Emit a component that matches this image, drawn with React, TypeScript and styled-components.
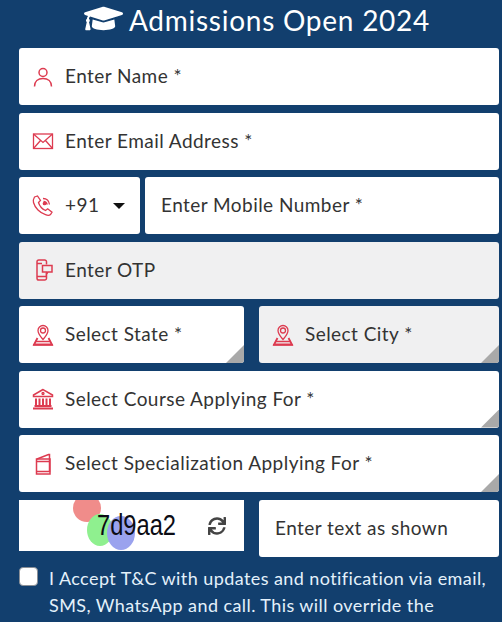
import React from "react";
import styled, { createGlobalStyle } from "styled-components";
import { FaGraduationCap, FaSync } from "react-icons/fa";

const GlobalStyle = createGlobalStyle`
  html, body {
    margin: 0;
    height: 622px;
    overflow: hidden;
    background: #123f6e;
  }
  * {
    box-sizing: border-box;
  }
`;

const Page = styled.div`
  width: 502px;
  height: 622px;
  overflow: hidden;
  padding: 0 3px 0 19px;
  background: #123f6e;
  font-family: Lato, "Open Sans", sans-serif;
`;

const Heading = styled.h1`
  height: 48px;
  margin: 0;
  display: flex;
  align-items: center;
  justify-content: center;
  gap: 6px;
  padding: 0 4px 9px 0;
  color: #fff;
  font-size: 28px;
  font-weight: 400;
  letter-spacing: 0.75px;
  svg {
    font-size: 39px;
    margin-top: -2px;
  }
`;

const Form = styled.div`
  display: flex;
  flex-direction: column;
  gap: 7.5px;
`;

const Row = styled.div<{ $gap: number }>`
  display: flex;
  gap: ${(p) => p.$gap}px;
`;

const Field = styled.div<{ $width?: number; $grey?: boolean; $pad?: number; $arrow?: boolean }>`
  position: relative;
  flex: ${(p) => (p.$width ? `0 0 ${p.$width}px` : "1 1 auto")};
  height: 57px;
  display: flex;
  align-items: center;
  padding-left: ${(p) => p.$pad ?? 13}px;
  padding-bottom: 2px;
  border-radius: 3px;
  overflow: hidden;
  background: ${(p) => (p.$grey ? "#f0f0f1" : "#fff")};
  color: #333;
  font-size: 19px;
  letter-spacing: 0.45px;
  &::after {
    content: "";
    display: ${(p) => (p.$arrow ? "block" : "none")};
    position: absolute;
    right: 0;
    bottom: 0;
    width: 18px;
    height: 18px;
    background: #a9a9a9;
    clip-path: polygon(100% 0, 100% 100%, 0 100%);
  }
`;

const IconSlot = styled.span`
  flex: 0 0 33px;
  display: flex;
  align-items: center;
  margin-top: 2px;
  svg {
    width: 22px;
    height: 22px;
    fill: none;
    stroke: #dd3b50;
    stroke-width: 1.3;
  }
`;

const Caret = styled.span`
  width: 0;
  height: 0;
  margin-left: 14px;
  margin-top: 2px;
  border-left: 6px solid transparent;
  border-right: 6px solid transparent;
  border-top: 6px solid #111;
`;

const CaptchaRow = styled.div`
  display: flex;
  gap: 15px;
`;

const CaptchaBox = styled.div`
  position: relative;
  flex: 0 0 225px;
  height: 51px;
  background: #fff;
  svg.captcha {
    display: block;
  }
`;

const Refresh = styled.span`
  position: absolute;
  left: 189px;
  top: 17px;
  display: flex;
  color: #444;
  font-size: 18px;
`;

const Accept = styled.div`
  display: flex;
  gap: 11px;
  padding-top: 8px;
`;

const Tick = styled.span`
  flex: 0 0 19px;
  height: 19px;
  margin-top: 2px;
  background: #fff;
  border: 1px solid #8a8f96;
  border-radius: 4px;
`;

const AcceptText = styled.p`
  margin: 0;
  width: 445px;
  color: #e4f1fb;
  font-size: 18px;
  letter-spacing: 0.42px;
  line-height: 27px;
`;

const User = () => (
  <svg viewBox="0 0 22 22">
    <circle cx="11" cy="6.500" r="4" strokeWidth="1.500" />
    <path d="M2.500 20.500c0-5 3.500-8 8.500-8s8.500 3 8.500 8" strokeWidth="1.500" />
  </svg>
);

const Mail = () => (
  <svg viewBox="0 0 22 22">
    <rect x="1.500" y="4" width="19" height="14.500" />
    <path d="M1.500 4 11 12.500 20.500 4M1.500 18.500 8.500 10.500M20.500 18.500 13.500 10.500" />
  </svg>
);

const Phone = () => (
  <svg viewBox="0 0 22 22">
    <path d="M2.500 2 5.500 1l3 4.500-2 2c.8 2.800 3.800 6.500 7 8l2.200-1.700 4.300 3.400-1.500 2.300c-1 1-3 1-5 .2C8 18 3 13 1.500 7.500c-.5-2 0-3.800 1-5.500z" />
    <path d="M11 3.500c3.500 0 6 2.500 6.500 6M11.500 6.500c2 0 3.300 1.300 3.700 3.200" />
    <circle cx="12.500" cy="8.500" r="1.200" fill="#dd3b50" />
  </svg>
);

const Otp = () => (
  <svg viewBox="0 0 22 22">
    <path d="M14.500 5.500V2.800A1.800 1.800 0 0 0 12.700 1H6.800A1.800 1.800 0 0 0 5 2.800v16.400A1.800 1.800 0 0 0 6.800 21h5.900a1.800 1.800 0 0 0 1.800-1.800V14" strokeWidth="1.500" />
    <path d="M5 4.500h5M5 17.500h9.500" />
    <path d="M10.500 6.500h9.500v6.500h-4l-1.500 2v-2h-4z" strokeWidth="1.500" />
  </svg>
);

const Pin = () => (
  <svg viewBox="0 0 22 22">
    <path d="M11 15.500c-2.500-3-5-5.500-5-9a5 5 0 0 1 10 0c0 3.500-2.500 6-5 9z" />
    <circle cx="11" cy="6.500" r="2.500" />
    <path d="M5.500 14 2 20.500h18l-3.500-6.500" strokeWidth="1.800" />
    <path d="M3.500 17.500h15M1 21h20" strokeWidth="1.600" />
  </svg>
);

const Bank = () => (
  <svg viewBox="0 0 22 22">
    <path d="M11 1.500 1.500 7v1.500h19V7z" strokeWidth="1.500" />
    <path d="M4 10.500v6.500M7.500 10.500v6.500M11 10.500v6.500M14.500 10.500v6.500M18 10.500v6.500" strokeWidth="2" />
    <path d="M2.500 18h17M1 20.500h20" strokeWidth="1.800" />
    <circle cx="11" cy="5.500" r="1" />
  </svg>
);

const Book = () => (
  <svg viewBox="0 0 22 22">
    <path d="M5 6 16.500 1.500h1V19" strokeWidth="1.500" />
    <rect x="4.500" y="6" width="13.500" height="15" strokeWidth="1.500" />
    <path d="M4.500 18.500h13.500M4.500 8.500h13.500" />
  </svg>
);

const Captcha = () => (
  <svg className="captcha" width="225" height="51" viewBox="0 0 225 51">
    <ellipse cx="68" cy="8" rx="14" ry="14" fill="#f08c8a" />
    <ellipse cx="81" cy="30" rx="13" ry="16" fill="#8ff08f" />
    <ellipse cx="102" cy="33" rx="14" ry="17" fill="#9aa2ee" />
    <text x="78" y="35" fontFamily="Liberation Sans" fontSize="30" textLength="79" lengthAdjust="spacingAndGlyphs" fill="#0c0c14">
      7d9aa2
    </text>
  </svg>
);

export default function App() {
  return (
    <Page>
      <GlobalStyle />
      <Heading>
        <FaGraduationCap />
        Admissions Open 2024
      </Heading>
      <Form>
        <Field>
          <IconSlot><User /></IconSlot>
          Enter Name *
        </Field>
        <Field>
          <IconSlot><Mail /></IconSlot>
          Enter Email Address *
        </Field>
        <Row $gap={5}>
          <Field $width={121}>
            <IconSlot><Phone /></IconSlot>
            +91
            <Caret />
          </Field>
          <Field $pad={16}>Enter Mobile Number *</Field>
        </Row>
        <Field $grey>
          <IconSlot><Otp /></IconSlot>
          Enter OTP
        </Field>
        <Row $gap={15}>
          <Field $width={225} $arrow>
            <IconSlot><Pin /></IconSlot>
            Select State *
          </Field>
          <Field $grey $arrow>
            <IconSlot><Pin /></IconSlot>
            Select City *
          </Field>
        </Row>
        <Field $arrow>
          <IconSlot><Bank /></IconSlot>
          Select Course Applying For *
        </Field>
        <Field $arrow>
          <IconSlot><Book /></IconSlot>
          Select Specialization Applying For *
        </Field>
        <CaptchaRow>
          <CaptchaBox>
            <Captcha />
            <Refresh><FaSync /></Refresh>
          </CaptchaBox>
          <Field $pad={16}>Enter text as shown</Field>
        </CaptchaRow>
      </Form>
      <Accept>
        <Tick />
        <AcceptText>
          I Accept T&amp;C with updates and notification via email, SMS, WhatsApp and call. This will override the
        </AcceptText>
      </Accept>
    </Page>
  );
}
